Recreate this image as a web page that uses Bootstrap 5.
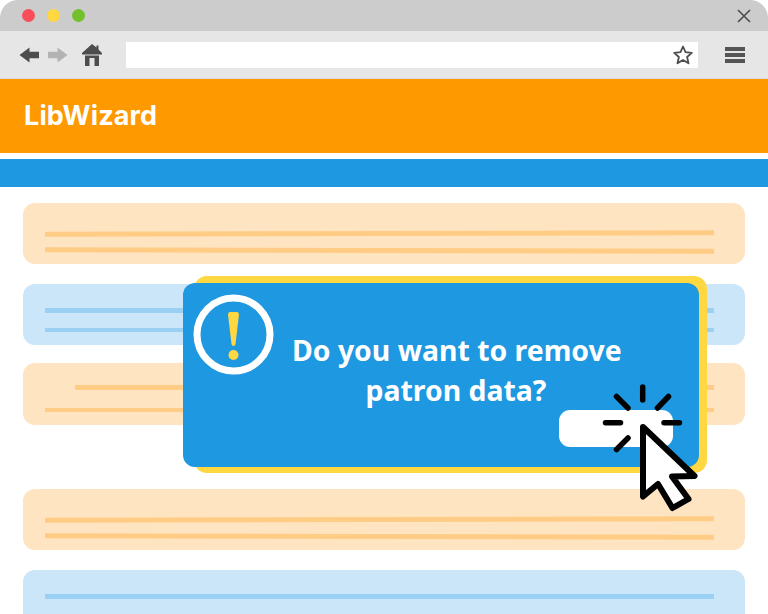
<!DOCTYPE html>
<html lang="en">
<head>
    <meta charset="UTF-8">
    <meta name="viewport" content="width=device-width, initial-scale=1.0">
    <title>LibWizard</title>
    <link href="https://cdn.jsdelivr.net/npm/bootstrap@5.3.0/dist/css/bootstrap.min.css" rel="stylesheet">
    <style>
        :root {
            --lw-orange: #ff9900;
            --lw-blue: #1f98e2;
            --lw-yellow: #ffd740;
        }

        body { background: #fff; height: 614px; overflow: hidden; font-family: "Noto Sans", sans-serif; }

        .title-strip { height: 31px; background: #cccccc; border-radius: 18px 18px 0 0; padding: 0 17px 0 22px; }
        .traffic-dot { width: 13px; height: 13px; border-radius: 50%; margin-right: 12px; }
        .dot-red { background: #f94f5a; }
        .dot-yellow { background: var(--lw-yellow); }
        .dot-green { background: #72c02c; }
        .tool-strip { height: 48px; background: #e6e6e6; padding: 0 23px 0 19px; border-bottom: 1px solid #ddd; }
        .arrow-next { margin-left: 9px; }
        .home-icon { margin-left: 14px; }
        .address-box { width: 572px; height: 26px; background: #fff; margin-left: 24px; padding-right: 5px; }
        .brand-strip { height: 74px; background: var(--lw-orange); padding: 0 24px; }
        .brand-name { font-family: "Inter", sans-serif; font-weight: 700; font-size: 27px; color: #fff; letter-spacing: .12px; }
        .blue-strip { height: 28px; margin-top: 6px; background: var(--lw-blue); }

        .sheet-area { padding-top: 16px; }
        .sheet-row { margin: 0 23px; padding: 0 31px 0 22px; height: 61px; border-radius: 12px; }
        .sheet-peach { background: #ffe4c2; }
        .sheet-sky { background: #cce6f9; }
        .sheet-peach .rule-line { background: #ffcc85; }
        .sheet-sky .rule-line { background: #99d0f3; }
        .rule-line { height: 4.5px; }
        .tilt-up { transform: rotate(-.14deg); }
        .tilt-down { transform: rotate(.13deg); }
        .indent-line { margin-left: 30px; }

        .row-a { padding-top: 28px; gap: 12px; margin-bottom: 20px; }
        .row-b { padding-top: 24px; gap: 15px; margin-bottom: 18px; }
        .row-c { padding-top: 22px; gap: 18px; margin-bottom: 64px; height: 62px; }
        .row-d { padding-top: 28px; gap: 12px; margin-bottom: 20px; }
        .row-e { padding-top: 24px; height: 60px; }

        .dialog-back { position: absolute; left: 194px; top: 276px; width: 513px; height: 197px; background: var(--lw-yellow); border-radius: 13px; }
        .dialog-box { position: absolute; left: 183px; top: 283px; width: 516px; height: 184px; background: var(--lw-blue); border-radius: 12px; padding: 11px 26px 20px 10px; }
        .dialog-text { margin: 36px 0 0 18px; width: 328px; font-size: 28.4px; line-height: 40px; font-weight: 700; color: #fff; white-space: nowrap; }
        .dialog-btn { width: 114px; height: 37px; background: #fff; border: 0; border-radius: 11px; }
        .click-mark { position: absolute; left: 600px; top: 380px; }
    </style>
</head>
<body>
    <!-- browser chrome -->
    <div class="title-strip d-flex align-items-center">
        <span class="traffic-dot dot-red"></span>
        <span class="traffic-dot dot-yellow"></span>
        <span class="traffic-dot dot-green"></span>
        <svg class="ms-auto" width="14" height="14" viewBox="0 0 14 14"><path d="M1 1L13 13M13 1L1 13" stroke="#4d4d4d" stroke-width="1.6" fill="none"/></svg>
    </div>
    <div class="tool-strip d-flex align-items-center">
        <svg width="20" height="18" viewBox="0 0 20 18"><path d="M0.5 9L10.5 1.5V5.8H20V12.2H10.5V16.5Z" fill="#4d4d4d"/></svg>
        <svg class="arrow-next" width="20" height="18" viewBox="0 0 20 18"><path d="M19.5 9L9.5 1.5V5.8H0V12.2H9.5V16.5Z" fill="#b3b3b3"/></svg>
        <svg class="home-icon" width="20" height="22" viewBox="0 0 20 22"><path d="M10 0L14.5 3.6V1.5H16.5V5.4L20 9V10.5H0V9ZM3 11.5H17V22H12.5V14H7.5V22H3Z" fill="#4d4d4d"/></svg>
        <div class="address-box d-flex align-items-center justify-content-end">
            <svg width="20" height="20" viewBox="0 0 20 20"><path d="M10 1.5L12.5 7.2L18.8 7.9L14.1 12L15.5 18.3L10 15L4.5 18.3L5.9 12L1.2 7.9L7.5 7.2Z" fill="none" stroke="#4d4d4d" stroke-width="1.8" stroke-linejoin="round"/></svg>
        </div>
        <svg class="ms-auto" width="20" height="16" viewBox="0 0 20 16"><path d="M0 0H20V4H0ZM0 6H20V10H0ZM0 12H20V16H0Z" fill="#555"/></svg>
    </div>

    <!-- site header -->
    <div class="brand-strip d-flex align-items-center">
        <span class="brand-name">LibWizard</span>
    </div>
    <div class="blue-strip"></div>

    <!-- page content -->
    <div class="sheet-area">
        <div class="sheet-row sheet-peach row-a d-flex flex-column">
            <div class="rule-line tilt-up"></div>
            <div class="rule-line tilt-down"></div>
        </div>
        <div class="sheet-row sheet-sky row-b d-flex flex-column">
            <div class="rule-line"></div>
            <div class="rule-line"></div>
        </div>
        <div class="sheet-row sheet-peach row-c d-flex flex-column">
            <div class="rule-line indent-line"></div>
            <div class="rule-line"></div>
        </div>
        <div class="sheet-row sheet-peach row-d d-flex flex-column">
            <div class="rule-line tilt-up"></div>
            <div class="rule-line tilt-down"></div>
        </div>
        <div class="sheet-row sheet-sky row-e d-flex flex-column">
            <div class="rule-line"></div>
        </div>
    </div>

    <!-- warning dialog over the page -->
    <div class="dialog-back"></div>
    <div class="dialog-box d-flex">
        <svg class="flex-shrink-0" width="81" height="81" viewBox="0 0 81 81">
            <circle cx="40.5" cy="40.5" r="36.5" fill="none" stroke="#fff" stroke-width="7"/>
            <path d="M37 18H44Q46 18 46 20.5L42.5 50Q42 52 40.5 52Q39 52 38.5 50L35 20.5Q35 18 37 18Z" fill="#ffd740"/>
            <circle cx="40.5" cy="61" r="5" fill="#ffd740"/>
        </svg>
        <div class="flex-grow-1 d-flex flex-column">
            <div class="dialog-text text-center">Do you want to remove<br>patron data?</div>
            <button class="dialog-btn mt-auto align-self-end" type="button"></button>
        </div>
    </div>
    <svg class="click-mark" width="104" height="134" viewBox="600 380 104 134">
        <g stroke="#000" stroke-width="5.5" stroke-linecap="round" fill="none">
            <path d="M642.7 387V400"/>
            <path d="M616.5 396.5L628 408"/>
            <path d="M668.5 396.5L657.5 408"/>
            <path d="M605.5 422.7H620.5"/>
            <path d="M664 422.7H679.5"/>
            <path d="M616.5 449.5L628 438"/>
        </g>
        <path d="M643 427L694.5 476L672 476.5L688.5 499L672.5 508L658 484L643 496.5Z" fill="#fff" stroke="#000" stroke-width="6" stroke-linejoin="round"/>
    </svg>

    <script src="https://cdn.jsdelivr.net/npm/bootstrap@5.3.0/dist/js/bootstrap.bundle.min.js"></script>
</body>
</html>
